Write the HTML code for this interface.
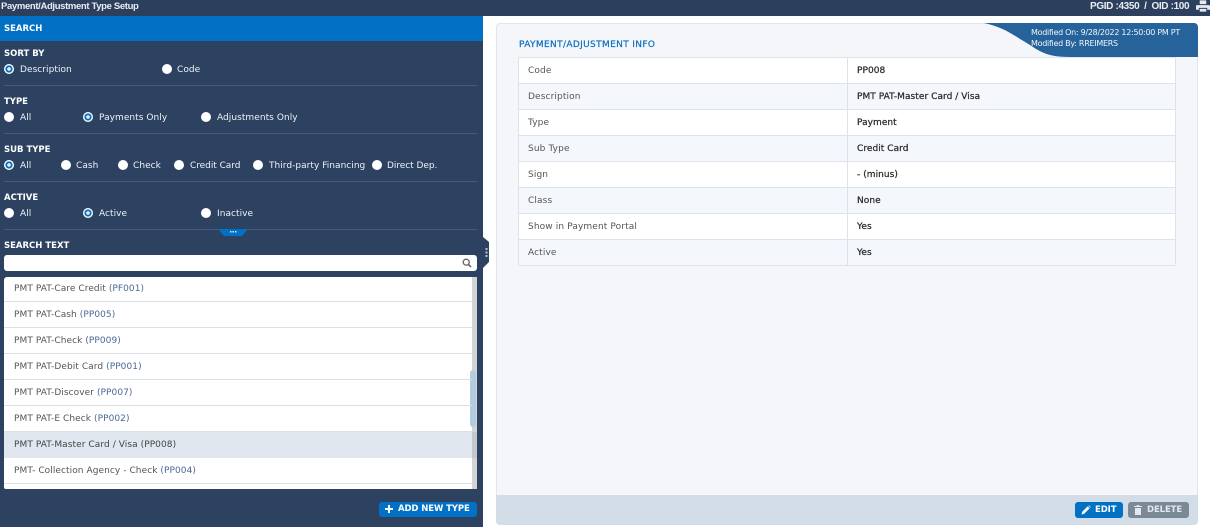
<!DOCTYPE html>
<html><head><meta charset="utf-8">
<style>
*{box-sizing:border-box}
html,body{margin:0;padding:0;width:1210px;height:527px;overflow:hidden;background:#fff;font-family:"DejaVu Sans","Liberation Sans",sans-serif}
.a{position:absolute}
.t{position:absolute;white-space:nowrap;line-height:12px;font-size:9px}
.l{color:#eef2f6;margin-top:-5px;letter-spacing:.05px}
.h{color:#fff;font-weight:bold;font-size:8.5px;margin-top:-5px}
.r{position:absolute;width:10px;height:10px;border-radius:50%;background:#fff;margin-top:-5px;margin-left:-.5px}
.r.on{background:radial-gradient(circle,#dfeaf5 0 1.6px,#0a6cbd 2.1px 3.4px,#fff 3.8px)}
.sep{position:absolute;left:4px;width:473px;height:1px;background:#465b7c}
.row{position:absolute;left:4px;width:468px;height:26px;border-bottom:1px solid #dcdfe3;color:#555;font-size:9px;line-height:27px;padding-left:10px;white-space:nowrap;letter-spacing:.07px}
.row span{color:#4a6a94}
.tr{position:absolute;left:519px;width:656px;height:26px;border-bottom:1px solid #dde3ec;font-size:9px;line-height:27px;white-space:nowrap}
.tr b{position:absolute;left:338px;top:0;color:#2b2b2b;font-weight:normal;-webkit-text-stroke:.25px #2b2b2b;letter-spacing:.05px}
.tr i{position:absolute;left:9px;top:0;font-style:normal;color:#555;letter-spacing:.12px}
.alt{background:#f4f8fc}
</style></head><body>

<div class="a" style="left:0;top:0;width:1210px;height:16px;background:#2c405e"></div>
<div class="t" style="left:1px;top:1px;font:bold 9.5px/12px 'Liberation Sans',sans-serif;color:#e9edf2;letter-spacing:-.35px">Payment/Adjustment Type Setup</div>
<div class="t" style="left:1090px;top:1px;font:bold 10px/12px 'Liberation Sans',sans-serif;color:#e9edf2;letter-spacing:-.35px">PGID :4350&nbsp; /&nbsp; OID :100</div>
<svg class="a" style="left:1196px;top:0" width="14" height="13" viewBox="0 0 15 13"><path d="M4 0h7v4H4zM1 5h13a1 1 0 0 1 1 1v4h-3V8H3v2H0V6a1 1 0 0 1 1-1zM4 9h7v3H4z" fill="#e6eaef"/></svg>

<div class="a" style="left:0;top:16px;width:483px;height:511px;background:#2d4260"></div>
<div class="a" style="left:0;top:16px;width:483px;height:25px;background:#0071c5"></div>
<div class="t h" style="left:4px;top:28px;font-size:8.5px">SEARCH</div>

<div class="t h" style="left:4px;top:53px">SORT BY</div>
<div class="r on" style="left:4px;top:69px"></div><div class="t l" style="left:20px;top:69px">Description</div>
<div class="r" style="left:162px;top:69px"></div><div class="t l" style="left:177px;top:69px">Code</div>
<div class="sep" style="top:85px"></div>

<div class="t h" style="left:4px;top:101px">TYPE</div>
<div class="r" style="left:4px;top:117px"></div><div class="t l" style="left:20px;top:117px">All</div>
<div class="r on" style="left:83px;top:117px"></div><div class="t l" style="left:99px;top:117px">Payments Only</div>
<div class="r" style="left:201px;top:117px"></div><div class="t l" style="left:217px;top:117px">Adjustments Only</div>
<div class="sep" style="top:133px"></div>

<div class="t h" style="left:4px;top:149px">SUB TYPE</div>
<div class="r on" style="left:4px;top:165px"></div><div class="t l" style="left:20px;top:165px">All</div>
<div class="r" style="left:61px;top:165px"></div><div class="t l" style="left:76px;top:165px">Cash</div>
<div class="r" style="left:118px;top:165px"></div><div class="t l" style="left:133px;top:165px">Check</div>
<div class="r" style="left:174px;top:165px"></div><div class="t l" style="left:190px;top:165px;letter-spacing:-.05px">Credit Card</div>
<div class="r" style="left:253px;top:165px"></div><div class="t l" style="left:269px;top:165px;letter-spacing:.03px">Third-party Financing</div>
<div class="r" style="left:372px;top:165px"></div><div class="t l" style="left:387px;top:165px;letter-spacing:-.05px">Direct Dep.</div>
<div class="sep" style="top:181px"></div>

<div class="t h" style="left:4px;top:197px">ACTIVE</div>
<div class="r" style="left:4px;top:213px"></div><div class="t l" style="left:20px;top:213px">All</div>
<div class="r on" style="left:83px;top:213px"></div><div class="t l" style="left:99px;top:213px">Active</div>
<div class="r" style="left:201px;top:213px"></div><div class="t l" style="left:217px;top:213px">Inactive</div>
<div class="sep" style="top:229px"></div>

<svg class="a" style="left:217px;top:229px" width="32" height="8" viewBox="0 0 32 8"><path d="M1 0h30l-6 7H7z" fill="#0071c5"/><path d="M13 2h1.500v1.500H13zM15.500 2H17v1.500h-1.500zM18 2h1.500v1.500H18z" fill="#d5e5f3"/></svg>

<div class="t h" style="left:4px;top:245px">SEARCH TEXT</div>
<div class="a" style="left:4px;top:255px;width:473px;height:16px;background:#fff;border-radius:3px"></div>
<svg class="a" style="left:462px;top:258px" width="10" height="10" viewBox="0 0 10 10"><circle cx="4.200" cy="4.200" r="3" fill="none" stroke="#666" stroke-width="1.300"/><path d="M6.500 6.500L9 9" stroke="#666" stroke-width="1.600"/></svg>

<svg class="a" style="left:483px;top:237px" width="7" height="31" viewBox="0 0 7 31"><path d="M0 0l6 5v20l-6 6z" fill="#2d4260"/><path d="M2.500 11h2v2h-2zM2.500 14.500h2v2h-2zM2.500 18h2v2h-2z" fill="#b9c4d2"/></svg>

<div class="a" style="left:4px;top:277px;width:473px;height:212px;background:#fff;border-radius:3px 3px 2px 2px;overflow:hidden"></div>
<div class="a" style="left:472px;top:277px;width:5px;height:212px;background:#d4d4d4"></div>
<div class="a" style="left:470px;top:370px;width:6px;height:57px;background:#b3cbdf;border-radius:3px"></div>
<div class="row" style="top:276px">PMT PAT-Care Credit <span>(PF001)</span></div>
<div class="row" style="top:302px">PMT PAT-Cash <span>(PP005)</span></div>
<div class="row" style="top:328px">PMT PAT-Check <span>(PP009)</span></div>
<div class="row" style="top:354px">PMT PAT-Debit Card <span>(PP001)</span></div>
<div class="row" style="top:380px">PMT PAT-Discover <span>(PP007)</span></div>
<div class="row" style="top:406px">PMT PAT-E Check <span>(PP002)</span></div>
<div class="row" style="top:432px;background:#e1e7ef;width:473px;border-bottom:none;color:#444">PMT PAT-Master Card / Visa <span style="color:#444">(PP008)</span></div>
<div class="row" style="top:458px">PMT- Collection Agency - Check <span>(PP004)</span></div>
<div class="a" style="left:472px;top:432px;width:5px;height:26px;background:#c4c8cd"></div>

<div class="a" style="left:379px;top:502px;width:98px;height:15px;background:#0071c5;border-radius:3px"></div>
<svg class="a" style="left:385px;top:505px" width="8" height="8" viewBox="0 0 8 8"><path d="M3 0h2v3h3v2H5v3H3V5H0V3h3z" fill="#fff"/></svg>
<div class="t" style="left:398px;top:503px;color:#fff;font-weight:bold;font-size:8.500px;letter-spacing:-.1px">ADD NEW TYPE</div>

<div class="a" style="left:496px;top:23px;width:702px;height:502px;background:#f4f6f9;border:1px solid #e1e6ee;border-radius:4px"></div>
<svg class="a" style="left:980px;top:23px" width="218" height="35" viewBox="0 0 218 35"><path d="M4 0H214a4 4 0 0 1 4 4V34H90C62 34 58 26 40 16 28 8 18 3 4 0z" fill="#26639b"/></svg>
<div class="t" style="left:1031px;top:27px;color:#f0f5fa;font-size:8px;line-height:11px;letter-spacing:-.28px">Modified On: 9/28/2022 12:50:00 PM PT<br>Modified By: RREIMERS</div>
<div class="t" style="left:519px;top:39px;color:#0a6fc0;font-size:9px;letter-spacing:.35px;-webkit-text-stroke:.2px #0a6fc0">PAYMENT/ADJUSTMENT INFO</div>

<div class="a" style="left:518px;top:57px;width:658px;height:209px;background:#fff;border:1px solid #dde3ec;border-radius:0 0 2px 2px"></div>
<div class="tr" style="top:58px"><i>Code</i><b>PP008</b></div>
<div class="tr alt" style="top:84px"><i>Description</i><b>PMT PAT-Master Card / Visa</b></div>
<div class="tr" style="top:110px"><i>Type</i><b>Payment</b></div>
<div class="tr alt" style="top:136px"><i>Sub Type</i><b>Credit Card</b></div>
<div class="tr" style="top:162px"><i>Sign</i><b>- (minus)</b></div>
<div class="tr alt" style="top:188px"><i>Class</i><b>None</b></div>
<div class="tr" style="top:214px"><i>Show in Payment Portal</i><b>Yes</b></div>
<div class="tr alt" style="top:240px;height:25px;border-bottom:none"><i>Active</i><b>Yes</b></div>
<div class="a" style="left:847px;top:58px;width:1px;height:207px;background:#dde3ec"></div>

<div class="a" style="left:496px;top:495px;width:702px;height:30px;background:#d3dde8;border-radius:0 0 4px 4px"></div>
<div class="a" style="left:1075px;top:502px;width:48px;height:16px;background:#0071c5;border-radius:3px"></div>
<svg class="a" style="left:1081px;top:505px" width="10" height="10" viewBox="0 0 10 10"><path d="M0.500 9.500l.6-2.600L6.600 1.400l2 2L3.100 8.900zM7.300 .7l.6-.4 1.800 1.800-.4.6z" fill="#fff"/></svg>
<div class="t" style="left:1095px;top:504px;color:#fff;font-weight:bold;font-size:8.500px;letter-spacing:-.1px">EDIT</div>
<div class="a" style="left:1128px;top:502px;width:61px;height:16px;background:#7b8996;border-radius:3px"></div>
<svg class="a" style="left:1134px;top:505px" width="8" height="10" viewBox="0 0 8 10"><path d="M3 0h2l.5 1H8v1H0V1h2.500zM1 3h6v7H1z" fill="#e4e8ec"/></svg>
<div class="t" style="left:1147px;top:504px;color:#e4e8ec;font-weight:bold;font-size:8.500px;letter-spacing:-.1px">DELETE</div>

</body></html>
